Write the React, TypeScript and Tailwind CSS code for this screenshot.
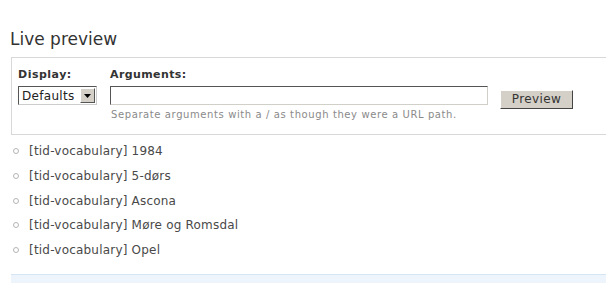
import { useState } from 'react'

const items = [
  '[tid-vocabulary] 1984',
  '[tid-vocabulary] 5-dørs',
  '[tid-vocabulary] Ascona',
  '[tid-vocabulary] Møre og Romsdal',
  '[tid-vocabulary] Opel',
]

export default function App() {
  const [args, setArgs] = useState('')

  return (
    <div className="h-[283px] w-[606px] overflow-hidden bg-white text-[#494949] [font-family:'DejaVu_Sans',Verdana,sans-serif]">
      <h2 className="ml-[10px] pt-[28px] text-[17px] leading-[22px] text-[#333]">Live preview</h2>

      <div className="ml-[11px] mt-[7px] flex h-[78px] border border-r-0 border-[#d8d8d8] pl-[6px] pt-[10px]">
        <div className="flex w-[92px] flex-col">
          <label className="text-[11px] font-bold leading-[14px] tracking-[0.5px] text-[#333]">Display:</label>
          <div className="mt-[4px] flex h-[19px] w-[79px] items-center border border-t-[#555] border-l-[#555] border-b-[#ccc] border-r-[#ccc] bg-white">
            <span className="flex-1 pl-[3px] text-[12px] leading-none tracking-[0.3px] text-[#222]">Defaults</span>
            <span className="mr-[1px] flex h-[15px] w-[15px] items-center justify-center border border-t-white border-l-white border-b-[#555] border-r-[#555] bg-[#d4d0c8]">
              <svg width="7" height="4" viewBox="0 0 7 4">
                <path d="M0 0h7L3.5 4z" fill="#000" />
              </svg>
            </span>
          </div>
        </div>

        <div className="flex flex-col">
          <label className="text-[11px] font-bold leading-[14px] tracking-[0.4px] text-[#333]">Arguments:</label>
          <input
            value={args}
            onChange={(e) => setArgs(e.target.value)}
            className="mt-[4px] h-[19px] w-[378px] border border-t-[#555] border-l-[#555] border-b-[#d0d0c8] border-r-[#d0d0c8] bg-white px-1 text-[12px] outline-none"
          />
          <p className="mt-[3px] pl-[1px] text-[10px] leading-[13px] tracking-[0.6px] text-[#8a8a8a]">
            Separate arguments with a / as though they were a URL path.
          </p>
        </div>

        <div className="ml-[12px] pt-[18px]">
          <button className="h-[19px] w-[73px] border border-t-white border-l-white border-b-[#444] border-r-[#444] bg-[#d4d0c8] text-[12px] leading-none tracking-[0.4px] text-[#333]">
            Preview
          </button>
        </div>
      </div>

      <ul className="mt-[4px] flex flex-col">
        {items.map((item) => (
          <li key={item} className="flex h-[24.7px] items-center">
            <span className="ml-[13px] mr-[10px] h-[6px] w-[6px] rounded-full border border-[#b5b5b5]" />
            <span className="text-[12px] tracking-[0.2px] text-[#494949]">{item}</span>
          </li>
        ))}
      </ul>

      <div className="ml-[11px] mt-[12px] h-[20px] border-t border-[#d6e5f3] bg-[#edf4fb]" />
    </div>
  )
}
